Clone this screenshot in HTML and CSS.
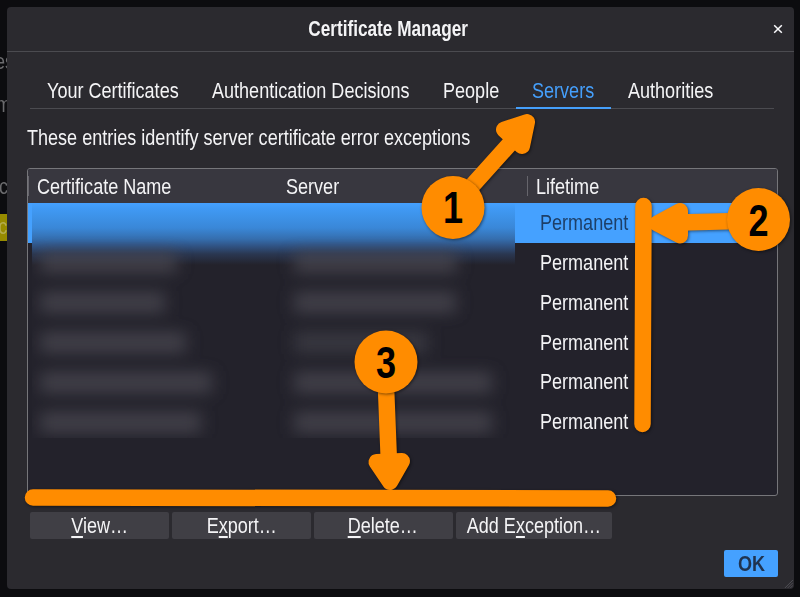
FILE: index.html
```html
<!DOCTYPE html>
<html lang="en">
<head>
    <meta charset="UTF-8">
    <meta name="viewport" content="width=device-width, initial-scale=1.0">
    <title>Certificate Manager</title>
    <link rel="stylesheet" href="styles.css">
</head>
<body>
    <!-- Page behind the dialog -->
    <div class="behind">
        <span class="behind-text first">es</span>
        <span class="behind-text second">m</span>
        <span class="behind-text third">c</span>
        <span class="behind-text marked">c</span>
    </div>

    <div class="dialog">
        <div class="titlebar">
            <h1 class="title"><span class="t">Certificate Manager</span></h1>
            <svg class="close" viewBox="0 0 10 10"><path d="M1.200 1.200 L8.800 8.800 M8.800 1.200 L1.200 8.800"/></svg>
        </div>
        <div class="content">
            <div class="tabs">
                <div class="tab your"><span class="t">Your Certificates</span></div>
                <div class="tab auth"><span class="t">Authentication Decisions</span></div>
                <div class="tab people"><span class="t">People</span></div>
                <div class="tab servers selected"><span class="t">Servers</span></div>
                <div class="tab authorities"><span class="t">Authorities</span></div>
            </div>
            <p class="description"><span class="t">These entries identify server certificate error exceptions</span></p>

            <div class="tree">
                <div class="tree-head">
                    <div class="col name"><span class="t">Certificate Name</span></div>
                    <div class="col server"><span class="t">Server</span></div>
                    <div class="col lifetime"><span class="t">Lifetime</span></div>
                </div>
                <div class="tree-body">
                    <div class="row selected"><span class="t">Permanent</span></div>
                    <div class="row"><span class="t">Permanent</span></div>
                    <div class="row"><span class="t">Permanent</span></div>
                    <div class="row"><span class="t">Permanent</span></div>
                    <div class="row"><span class="t">Permanent</span></div>
                    <div class="row"><span class="t">Permanent</span></div>
                    <!-- Names and servers are hidden -->
                    <div class="redacted">
                        <div class="glow"></div>
                        <svg class="smudges" viewBox="0 0 483 235">
                            <defs>
                                <filter id="soft" x="-20%" y="-20%" width="140%" height="140%"><feGaussianBlur stdDeviation="8 7"/></filter>
                            </defs>
                            <g filter="url(#soft)">
                                <rect x="8" y="48" width="137" height="23"/>
                                <rect x="8" y="88" width="125" height="23"/>
                                <rect x="8" y="128" width="146" height="23"/>
                                <rect x="8" y="168" width="172" height="23"/>
                                <rect x="8" y="208" width="161" height="23"/>
                                <rect x="262" y="48" width="163" height="23"/>
                                <rect x="262" y="88" width="162" height="23"/>
                                <rect x="262" y="128" width="134" height="23" opacity=".7"/>
                                <rect x="262" y="168" width="198" height="23"/>
                                <rect x="262" y="208" width="198" height="23"/>
                            </g>
                        </svg>
                    </div>
                </div>
            </div>

            <div class="buttons">
                <button class="button"><span class="t"><u>V</u>iew…</span></button>
                <button class="button"><span class="t">E<u>x</u>port…</span></button>
                <button class="button"><span class="t"><u>D</u>elete…</span></button>
                <button class="button wide"><span class="t">Add E<u>x</u>ception…</span></button>
            </div>
            <div class="footer">
                <button class="button ok"><span class="t">OK</span></button>
            </div>
        </div>
        <svg class="resizer" viewBox="0 0 10 10"><path d="M1 10 L10 1 M4 10 L10 4 M7 10 L10 7"/></svg>
    </div>

    <!-- Numbered steps -->
    <svg class="steps" viewBox="0 0 800 597">
        <g class="step">
            <path class="line" d="M453 207 L515 138"/>
            <path class="head" d="M527 122 L504 129.500 L522 146 Z"/>
        </g>
        <g class="step">
            <path class="line" d="M643.500 206 L642.500 424"/>
            <path class="line" d="M758 220.500 L680 222.500"/>
            <path class="head" d="M657 223.500 L680 211 L680 235.500 Z"/>
        </g>
        <g class="step">
            <path class="line" d="M33 497.500 L608 498.500"/>
            <path class="line" d="M385 362 L389 464"/>
            <path class="head" d="M390 482 L376.500 462 L402 461 Z"/>
        </g>
        <g class="step">
            <circle cx="453" cy="207.500" r="31.500"/>
            <circle cx="758.500" cy="219.500" r="31.500"/>
            <circle cx="386" cy="362" r="31.500"/>
        </g>
        <g class="numbers">
            <text transform="translate(453 223) scale(.82 1)">1</text>
            <text transform="translate(758.500 235.500) scale(.82 1)">2</text>
            <text transform="translate(386 377.500) scale(.82 1)">3</text>
        </g>
    </svg>
</body>
</html>
```
FILE: styles.css
```css
* {
    box-sizing: border-box;
}
body {
    margin: 0;
    width: 800px;
    height: 597px;
    padding: 7px 6px 8px 7px;
    overflow: hidden;
    position: relative;
    background-color: #0c0c0f;
    color: #f4f4f6;
    font-family: "Liberation Sans", Arial, sans-serif;
    font-size: 22px;
    line-height: 26px;
}
/* Narrow text, the box keeps its natural width */
.t {
    display: inline-block;
    white-space: nowrap;
    transform: scaleX(.82);
    transform-origin: left center;
}
.behind {
    position: absolute;
    left: 0;
    top: 0;
    width: 7px;
    height: 597px;
    overflow: hidden;
    color: #6b6b6e;
}
.behind-text {
    position: absolute;
    transform: scaleX(.82);
    transform-origin: left center;
}
.first { left: -5px; top: 49px; }
.second { left: -4px; top: 92px; }
.third { left: -1px; top: 174px; }
.marked {
    left: 0;
    top: 214px;
    width: 14px;
    height: 27px;
    text-indent: -2px;
    background-color: #978b00;
    color: #b5ad50;
}
.dialog {
    position: relative;
    width: 787px;
    height: 582px;
    background-color: #2b2a2f;
    border-radius: 4px;
    overflow: hidden;
}
.titlebar {
    display: flex;
    align-items: center;
    justify-content: center;
    height: 45px;
    border-bottom: 1px solid #4b4b50;
    position: relative;
}
.title {
    margin: 0 24px 0 0;
    font-size: 22px;
    line-height: 26px;
}
.title .t,
.button .t {
    transform-origin: center;
}
.title .t {
    transform: scaleX(.782);
}
.close {
    position: absolute;
    right: 11px;
    top: 17px;
    width: 10px;
    height: 10px;
    stroke: #fbfbfe;
    stroke-width: 1.5;
}
.content {
    padding: 19px 15px 0 20px;
}
.tabs {
    display: flex;
    height: 38px;
    margin: 0 0 0 3px;
    width: 744px;
    border-bottom: 1px solid #4b4b50;
}
.tab {
    height: 38px;
    padding: 7px 0 0 17px;
}
.your { width: 165px; }
.auth { width: 231px; }
.people { width: 90px; }
.servers { width: 95px; }
.authorities { width: 118px; }
.tab.selected {
    padding-left: 16px;
    color: #459ffb;
    border-bottom: 2px solid #459ffb;
}
.description {
    margin: 16px 0 17px;
}
.tree {
    width: 751px;
    height: 328px;
    border: 1px solid #76767a;
    border-radius: 3px;
    background-color: #23222b;
    overflow: hidden;
}
.tree-head {
    display: flex;
    height: 34px;
    padding-top: 5px;
    background-color: #38373f;
}
.col {
    position: relative;
    padding-left: 9px;
}
.name { width: 249px; }
.server { width: 250px; }
.name::before,
.lifetime::before {
    content: "";
    position: absolute;
    left: 0;
    top: 2px;
    width: 1px;
    height: 20px;
    background-color: #66656c;
}
.tree-body {
    position: relative;
}
.row {
    display: flex;
    align-items: center;
    height: 39.75px;
    padding: 1px 0 0 511.7px;
}
.row.selected {
    background-color: #45a1ff;
    color: #1d3f68;
}
.redacted {
    position: absolute;
    left: 4px;
    top: 0;
    width: 483px;
    height: 235px;
    overflow: hidden;
    background-color: #23222b;
}
.glow {
    position: absolute;
    left: 0;
    right: 0;
    top: 0;
    height: 66px;
    background: linear-gradient(#45a1ff 0, #409af5 5px, #3d92e8 14px, #3a87d7 25px, #356eae 36px, #305384 43px, #2a3751 51px, #23222b 62px);
}
.smudges {
    position: absolute;
    left: 0;
    top: 0;
    width: 483px;
    height: 235px;
    fill: #504e57;
    opacity: .62;
}
.buttons {
    display: flex;
    gap: 3.2px;
    margin: 16px 0 0 3.2px;
}
.button {
    display: flex;
    align-items: center;
    justify-content: center;
    width: 138.7px;
    height: 27px;
    padding: 1px 0 0;
    border: none;
    border-radius: 2px;
    background-color: #403f45;
    color: #f4f4f6;
    font: inherit;
    line-height: 26px;
}
.button.wide {
    width: 156.5px;
}
.button u {
    text-decoration-thickness: 1.5px;
    text-underline-offset: 3px;
    text-decoration-skip-ink: none;
}
.footer {
    display: flex;
    justify-content: flex-end;
    margin-top: 11px;
    padding-right: 1px;
}
.button.ok {
    width: 54px;
    background-color: #45a1ff;
    color: #1f3350;
    font-weight: bold;
}
.resizer {
    position: absolute;
    right: 1px;
    bottom: 1px;
    width: 9px;
    height: 9px;
    stroke: #55545a;
    stroke-width: 1;
}
.steps {
    position: absolute;
    left: 0;
    top: 0;
    width: 800px;
    height: 597px;
}
.step {
    fill: #ff8c00;
    filter: drop-shadow(1px 1px 1.5px rgba(0, 0, 0, .5));
}
.line {
    fill: none;
    stroke: #ff8c00;
    stroke-width: 16.5;
    stroke-linecap: round;
}
.head {
    stroke: #ff8c00;
    stroke-width: 16;
    stroke-linejoin: round;
}
.numbers {
    fill: #000;
    font-size: 44px;
    font-weight: bold;
    text-anchor: middle;
}
```
